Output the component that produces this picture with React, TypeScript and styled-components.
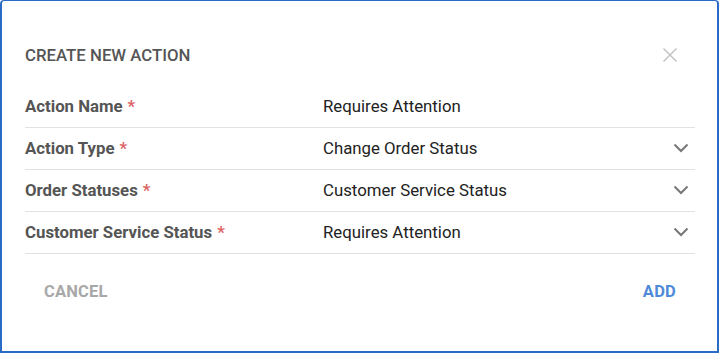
import React from "react";
import styled, { createGlobalStyle } from "styled-components";

const Global = createGlobalStyle`
  html, body { margin: 0; padding: 0; background: #fff; }
  body { font-family: Roboto, "Liberation Sans", Arial, sans-serif; }
  * { box-sizing: border-box; }
`;

const Frame = styled.div`
  width: 719px;
  height: 353px;
  border: 2px solid #2a6bc8;
  border-top-width: 1px;
  border-radius: 4px 4px 0 0;
  background: #fff;
  padding: 42px 22px 0 23px;
  display: flex;
  flex-direction: column;
`;

const Header = styled.div`
  display: flex;
  align-items: center;
  justify-content: space-between;
  height: 24px;
  margin-bottom: 19px;
`;

const Title = styled.h2`
  margin: 0;
  font-size: 16.8px;
  font-weight: 500;
  color: #555;
`;

const CloseButton = styled.button`
  border: 0;
  background: none;
  padding: 0;
  width: 16px;
  height: 16px;
  margin-right: 17px;
  display: flex;
  align-items: center;
  justify-content: center;
  cursor: pointer;
`;

const Rows = styled.div`
  display: flex;
  flex-direction: column;
`;

const Row = styled.div`
  display: grid;
  grid-template-columns: 298px 1fr 24px;
  align-items: center;
  height: 42px;
  border-bottom: 1px solid #e2e2e2;
  padding-bottom: 1px;
`;

const Label = styled.div`
  font-size: 16.8px;
  font-weight: 700;
  color: #555;
`;

const Required = styled.span`
  color: #dc6464;
  margin-left: 5px;
`;

const Value = styled.div`
  font-size: 16.8px;
  font-weight: 400;
  color: #222;
`;

const Chevron = styled.div`
  display: flex;
  align-items: center;
  justify-content: flex-start;
  padding-left: 2px;
`;

const Footer = styled.div`
  display: flex;
  justify-content: space-between;
  margin-top: 19px;
  padding: 0 3px;
`;

const TextButton = styled.button<{ $primary?: boolean }>`
  border: 0;
  background: none;
  height: 36px;
  padding: 0 16px;
  font-family: inherit;
  font-size: 16.5px;
  font-weight: 700;
  letter-spacing: 0.2px;
  text-transform: uppercase;
  color: ${(p) => (p.$primary ? "#4f8ad8" : "#a8a8a8")};
  cursor: pointer;
`;

const ChevronIcon = () => (
  <svg width="16" height="10" viewBox="0 0 16 10">
    <polyline points="1.5,1.5 8,8 14.5,1.5" fill="none" stroke="#777" strokeWidth="2" />
  </svg>
);

const CloseIcon = () => (
  <svg width="16" height="16" viewBox="0 0 16 16">
    <path d="M1.5 1.5 L14.5 14.5 M14.5 1.5 L1.5 14.5" stroke="#c4c4c4" strokeWidth="1.5" fill="none" />
  </svg>
);

const fields = [
  { label: "Action Name", value: "Requires Attention", select: false },
  { label: "Action Type", value: "Change Order Status", select: true },
  { label: "Order Statuses", value: "Customer Service Status", select: true },
  { label: "Customer Service Status", value: "Requires Attention", select: true },
];

export default function App() {
  return (
    <>
      <Global />
      <Frame>
        <Header>
          <Title>CREATE NEW ACTION</Title>
          <CloseButton aria-label="Close">
            <CloseIcon />
          </CloseButton>
        </Header>
        <Rows>
          {fields.map((f) => (
            <Row key={f.label}>
              <Label>
                {f.label}
                <Required>*</Required>
              </Label>
              <Value>{f.value}</Value>
              <Chevron>{f.select && <ChevronIcon />}</Chevron>
            </Row>
          ))}
        </Rows>
        <Footer>
          <TextButton>Cancel</TextButton>
          <TextButton $primary>Add</TextButton>
        </Footer>
      </Frame>
    </>
  );
}
